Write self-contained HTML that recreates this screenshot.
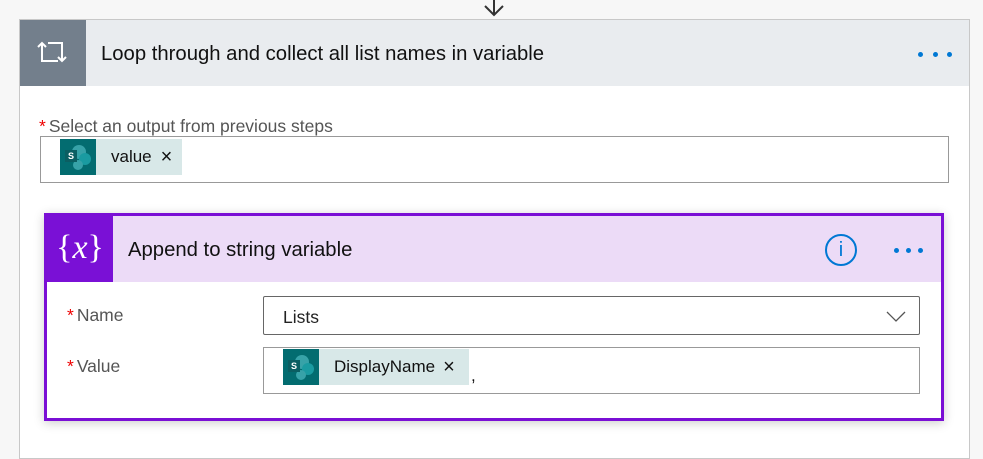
<!DOCTYPE html>
<html><head><style>
*{margin:0;padding:0;box-sizing:border-box}
html,body{width:983px;height:447px}
body{background:#f7f7f7;font-family:"Liberation Sans",sans-serif;position:relative;overflow:hidden}
.a{position:absolute}
.tok{position:absolute;background:#d8e8e8;height:36px;display:flex;align-items:center;font-size:17px;color:#111}
.sp{width:36px;height:36px;background:#036c70;position:relative}
.sp i{position:absolute;border-radius:50%;background:#37a2a8}
.sp b{position:absolute;left:5px;top:11px;width:12px;height:12px;background:#0b5e62;color:#fff;font-size:9px;font-weight:bold;text-align:center;line-height:12px;font-style:normal}
.req{color:#e00;margin-right:3px}
.lbl{font-size:17.5px;color:#555}
.dots{display:flex;justify-content:space-between}
.dots span{width:5px;height:5px;border-radius:50%;background:#0078d4}
</style></head><body>
<svg class="a" style="left:482px;top:0" width="26" height="18"><path d="M12 0V15M3 6L12 15L21 6" stroke="#333" stroke-width="2" fill="none"/></svg>
<div class="a" style="left:19px;top:19px;width:951px;height:440px;background:#fff;border:1px solid #c8c8c8"></div>
<div class="a" style="left:20px;top:20px;width:949px;height:66px;background:#e9ecef"></div>
<div class="a" style="left:20px;top:20px;width:66px;height:66px;background:#737f8c"></div>
<svg class="a" style="left:36px;top:40px" width="34" height="26"><g stroke="#fff" stroke-width="2" fill="none"><path d="M2 7L6 3L10 7M6 3V21H22"/><path d="M12 3H26V21M22 17L26 21L30 17"/></g></svg>
<div class="a" style="left:101px;top:43px;font-size:20.3px;color:#111">Loop through and collect all list names in variable</div>
<div class="a dots" style="left:918px;top:52px;width:34px"><span></span><span></span><span></span></div>
<div class="a lbl" style="left:39px;top:116px"><span class="req">*</span>Select an output from previous steps</div>
<div class="a" style="left:40px;top:136px;width:909px;height:47px;border:1px solid #999"></div>
<div class="tok" style="left:60px;top:139px;width:122px"><div class="sp"><i style="left:12px;top:6px;width:14px;height:14px"></i><i style="left:19px;top:14px;width:12px;height:12px;background:#1a9ba1"></i><i style="left:13px;top:21px;width:10px;height:10px"></i><b>S</b></div><span style="margin-left:15px">value</span><span style="margin-left:9px;font-size:20px">×</span></div>
<div class="a" style="left:44px;top:213px;width:900px;height:208px;border:3px solid #7a0fd5;box-shadow:0 2px 10px rgba(0,0,0,.2);background:#fff"></div>
<div class="a" style="left:47px;top:216px;width:894px;height:66px;background:#ecdbf7"></div>
<div class="a" style="left:47px;top:216px;width:66px;height:66px;background:#7a10d6;color:#fff;font-size:34px;font-family:'Liberation Serif',serif;text-align:center;line-height:64px">{<i>x</i>}</div>
<div class="a" style="left:128px;top:239px;font-size:20.3px;color:#111">Append to string variable</div>
<div class="a" style="left:825px;top:234px;width:32px;height:32px;border:2px solid #0078d4;border-radius:50%;color:#0078d4;font-size:20px;text-align:center;line-height:28px">i</div>
<div class="a dots" style="left:894px;top:248px;width:29px"><span></span><span></span><span></span></div>
<div class="a lbl" style="left:67px;top:305px"><span class="req">*</span>Name</div>
<div class="a lbl" style="left:67px;top:356px"><span class="req">*</span>Value</div>
<div class="a" style="left:263px;top:296px;width:657px;height:39px;border:1px solid #666;border-radius:2px;font-size:17.5px;color:#222;padding:10px 0 0 19px">Lists</div>
<svg class="a" style="left:886px;top:311px" width="20" height="12"><path d="M1 1L10 10L19 1" stroke="#555" stroke-width="1.3" fill="none"/></svg>
<div class="a" style="left:263px;top:347px;width:657px;height:47px;border:1px solid #999"></div>
<div class="tok" style="left:283px;top:349px;width:186px"><div class="sp"><i style="left:12px;top:6px;width:14px;height:14px"></i><i style="left:19px;top:14px;width:12px;height:12px;background:#1a9ba1"></i><i style="left:13px;top:21px;width:10px;height:10px"></i><b>S</b></div><span style="margin-left:15px">DisplayName</span><span style="margin-left:8px;font-size:20px">×</span></div>
<div class="a" style="left:471px;top:366px;font-size:17px;color:#111">,</div>
</body></html>
